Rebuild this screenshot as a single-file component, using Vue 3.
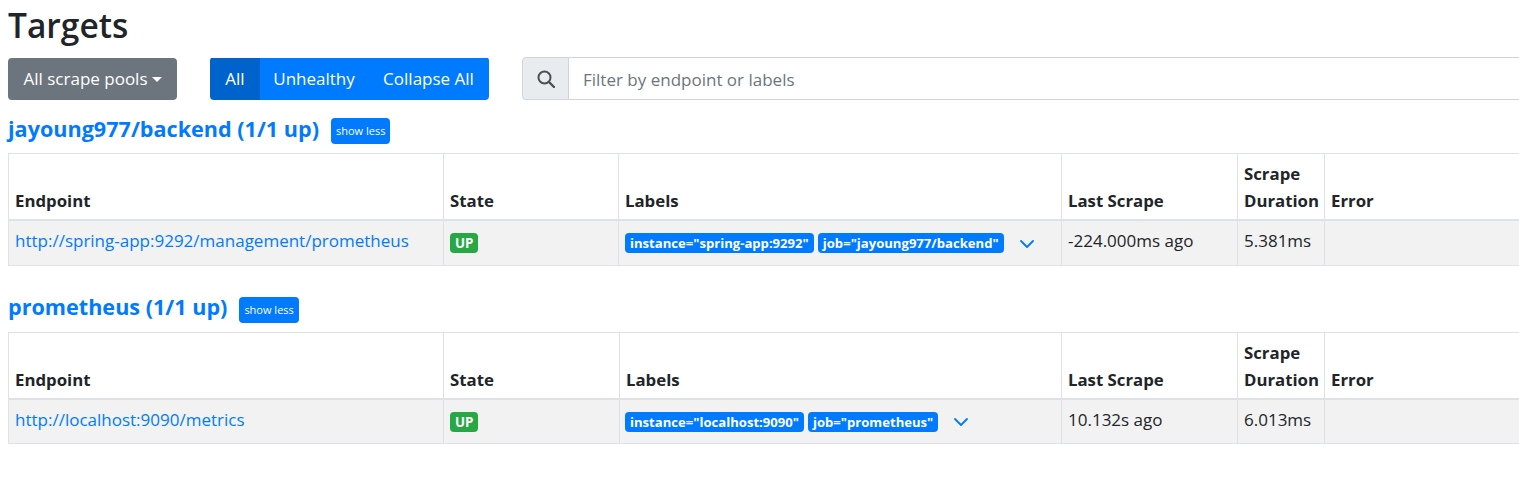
<script setup>
const pools = [
  { name: 'jayoung977/backend (1/1 up)', url: 'http://spring-app:9292/management/prometheus', labels: ['instance="spring-app:9292"', 'job="jayoung977/backend"'], last: '-224.000ms ago', dur: '5.381ms', cols: '435px 175px 443px 176px 87px 1fr', cls: 'first' },
  { name: 'prometheus (1/1 up)', url: 'http://localhost:9090/metrics', labels: ['instance="localhost:9090"', 'job="prometheus"'], last: '10.132s ago', dur: '6.013ms', cols: '435px 176px 442px 176px 87px 1fr', cls: 'second' }
]
</script>

<template>
  <div class="page">
    <h1>Targets</h1>
    <div class="controls">
      <button class="btn grey">All scrape pools<span class="caret"></span></button>
      <div class="group">
        <button class="btn blue active w-all">All</button>
        <button class="btn blue w-unhealthy">Unhealthy</button>
        <button class="btn blue w-collapse">Collapse All</button>
      </div>
      <div class="search">
        <span class="addon">
          <svg width="18" height="18" viewBox="0 0 18 18"><circle cx="7.500" cy="7.500" r="6" fill="none" stroke="#495057" stroke-width="2"/><path d="M12 12l5 5" fill="none" stroke="#495057" stroke-width="2.400" stroke-linecap="round"/></svg>
        </span>
        <div class="input">Filter by endpoint or labels</div>
      </div>
    </div>
    <section v-for="p in pools" :key="p.name" :class="['pool', p.cls]">
      <div class="title">
        <a class="name">{{ p.name }}</a>
        <button class="less">show less</button>
      </div>
      <div class="table" :style="{ gridTemplateColumns: p.cols }">
        <div class="th">Endpoint</div>
        <div class="th">State</div>
        <div class="th">Labels</div>
        <div class="th">Last Scrape</div>
        <div class="th">Scrape Duration</div>
        <div class="th">Error</div>
        <div class="td"><a class="link">{{ p.url }}</a></div>
        <div class="td"><span class="up">UP</span></div>
        <div class="td labels">
          <span v-for="l in p.labels" :key="l" class="label">{{ l }}</span>
          <svg class="chev" width="14" height="10" viewBox="0 0 14 10"><path fill="none" stroke="#007bff" stroke-width="1.800" stroke-linecap="round" stroke-linejoin="round" d="M1 2l6 6 6-6"/></svg>
        </div>
        <div class="td">{{ p.last }}</div>
        <div class="td">{{ p.dur }}</div>
        <div class="td"></div>
      </div>
    </section>
  </div>
</template>

<style>
html, body { margin: 0; background: #fff; overflow: hidden; }
</style>

<style scoped>
.page { width: 1535px; box-sizing: border-box; padding: 0 0 0 8px; font-family: "Open Sans", "Liberation Sans", sans-serif; font-size: 17px; color: #212529; line-height: 24px; }
h1 { margin: 0 0 7px; font-size: 33.500px; line-height: 50px; font-weight: 600; height: 50px; }
.controls { display: flex; align-items: flex-start; }
.btn { font: inherit; font-size: 17px; border: 0; color: #fff; height: 42px; padding: 0; margin-top: 1px; }
.grey { background: #6c757d; border-radius: 4px; width: 169px; }
.caret { display: inline-block; margin-left: 4px; vertical-align: 3px; border-top: 5px solid #fff; border-left: 5px solid transparent; border-right: 5px solid transparent; }
.group { display: flex; margin-left: 33px; border-radius: 4px; overflow: hidden; }
.blue { background: #007bff; }
.active { background: #0062cc; }
.w-all { width: 50px; }
.w-unhealthy { width: 108px; }
.w-collapse { width: 121px; }
.search { display: flex; flex: 1; margin-left: 33px; height: 43px; box-sizing: border-box; }
.addon { width: 47px; flex: none; background: #e9ecef; border: 1px solid #ced4da; border-radius: 4px 0 0 4px; box-sizing: border-box; display: flex; align-items: center; justify-content: center; }
.input { flex: 1; border: 1px solid #ced4da; border-left: 0; color: #6c757d; padding: 0 14px; line-height: 43px; box-sizing: border-box; }
.first { margin-top: 14px; }
.second { margin-top: 26px; }
.title { display: flex; align-items: flex-start; height: 30px; margin-bottom: 9px; line-height: 30px; }
.second .title { margin-bottom: 10px; }
.name { color: #007bff; font-size: 21.600px; font-weight: 700; }
.less { font: inherit; font-size: 11px; line-height: 26px; background: #007bff; color: #fff; border: 0; border-radius: 4px; height: 26px; padding: 0 5px; margin: 4px 0 0 12px; }
.second .less { margin-top: 5px; }
.table { display: grid; border-left: 1px solid #dee2e6; }
.th, .td { border-right: 1px solid #dee2e6; padding: 0 6px; box-sizing: border-box; }
.th { font-weight: 700; font-size: 16.800px; border-top: 1px solid #dee2e6; border-bottom: 2px solid #dee2e6; height: 68px; display: flex; align-items: flex-end; padding-bottom: 5px; line-height: 27px; }
.td { background: #f2f2f2; border-bottom: 1px solid #dee2e6; height: 45px; display: flex; align-items: center; padding-bottom: 4px; }
.second .td { height: 44px; }
.link { color: #007bff; }
.up { background: #28a745; color: #fff; font-size: 13.300px; font-weight: 700; border-radius: 4px; padding: 0 5px; line-height: 20px; margin-top: 4px; }
.label { background: #007bff; color: #fff; font-size: 13.100px; font-weight: 700; border-radius: 4px; padding: 0 5px; line-height: 20px; margin: 4px 4px 0 0; white-space: nowrap; }
.second .label:first-child { margin-left: -1px; }
.chev { margin: 5px 0 0 12px; }
</style>
